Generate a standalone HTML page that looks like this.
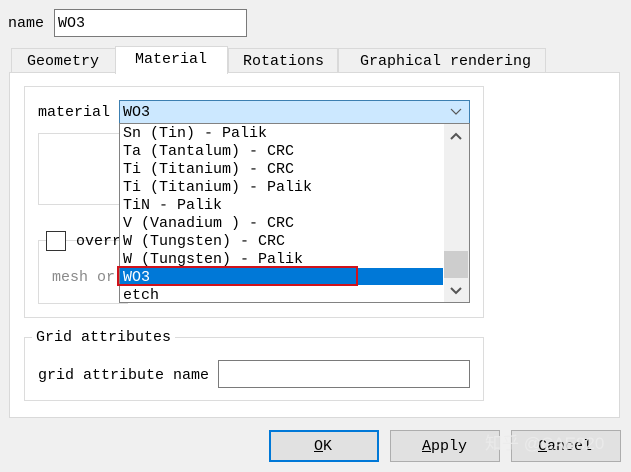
<!DOCTYPE html>
<html><head><meta charset="utf-8"><style>
*{margin:0;padding:0;box-sizing:border-box}
body{width:631px;height:472px;background:#f0f0f0;position:relative;overflow:hidden;font-family:"Liberation Mono","Noto Sans CJK SC",monospace;font-size:15px;color:#000}
.a{position:absolute;white-space:pre;line-height:18px}
.box{position:absolute}
</style></head><body>
<div class="a" style="left:8px;top:15px">name</div>
<div class="box" style="left:54px;top:9px;width:193px;height:28px;background:#fff;border:1px solid #7a7a7a"></div>
<div class="a" style="left:58px;top:15px">WO3</div>

<!-- tabs -->
<div class="box" style="left:11px;top:48px;width:105px;height:25px;background:#f0f0f0;border:1px solid #d9d9d9;border-bottom:none"></div>
<div class="a" style="left:27px;top:53px">Geometry</div>
<div class="box" style="left:228px;top:48px;width:110px;height:25px;border:1px solid #d9d9d9;border-bottom:none"></div>
<div class="a" style="left:243px;top:53px">Rotations</div>
<div class="box" style="left:338px;top:48px;width:208px;height:25px;border:1px solid #d9d9d9;border-bottom:none"></div>
<div class="a" style="left:360px;top:53px">Graphical rendering</div>
<div class="box" style="left:9px;top:72px;width:611px;height:346px;background:#fff;border:1px solid #d9d9d9"></div>
<div class="box" style="left:115px;top:46px;width:113px;height:28px;background:#fff;border:1px solid #d9d9d9;border-bottom:none"></div>
<div class="a" style="left:135px;top:51px">Material</div>

<!-- group 1 -->
<div class="box" style="left:24px;top:86px;width:460px;height:232px;border:1px solid #dcdcdc"></div>
<div class="a" style="left:38px;top:104px">material</div>
<div class="box" style="left:38px;top:133px;width:90px;height:72px;border:1px solid #dcdcdc"></div>
<div class="box" style="left:38px;top:240px;width:90px;height:64px;border:1px solid #dcdcdc"></div>
<div class="box" style="left:46px;top:231px;width:20px;height:20px;background:#fff;border:1px solid #333"></div>
<div class="a" style="left:76px;top:233px">overr</div>
<div class="a" style="left:52px;top:269px;color:#8a8a8a">mesh or</div>

<!-- combo -->
<div class="box" style="left:119px;top:100px;width:351px;height:24px;background:#cce8ff;border:1px solid #3c7fb1"></div>
<div class="a" style="left:123px;top:104px">WO3</div>
<svg class="box" style="left:449px;top:106px" width="14" height="10"><path d="M2 3 L7 8 L12 3" stroke="#555" fill="none" stroke-width="1.2"/></svg>
<div class="box" style="left:119px;top:123px;width:351px;height:180px;background:#fff;border:1px solid #828282"></div>
<div class="box" style="left:444px;top:124px;width:25px;height:178px;background:#f0f0f0"></div>
<div class="box" style="left:444px;top:251px;width:24px;height:27px;background:#cdcdcd"></div>
<svg class="box" style="left:449px;top:131px" width="14" height="10"><path d="M2 8 L7 3 L12 8" stroke="#555" fill="none" stroke-width="2"/></svg>
<svg class="box" style="left:449px;top:286px" width="14" height="10"><path d="M2 2 L7 7 L12 2" stroke="#555" fill="none" stroke-width="2"/></svg>
<div class="box" style="left:120px;top:268px;width:323px;height:17px;background:#0078d7"></div>
<div class="a" style="left:123px;top:125px">Sn (Tin) - Palik
Ta (Tantalum) - CRC
Ti (Titanium) - CRC
Ti (Titanium) - Palik
TiN - Palik
V (Vanadium ) - CRC
W (Tungsten) - CRC
W (Tungsten) - Palik
<span style="color:#fff">WO3</span>
etch</div>
<div class="box" style="left:117px;top:266px;width:241px;height:20px;border:2px solid #d0121b"></div>

<!-- group 2 -->
<div class="box" style="left:24px;top:337px;width:460px;height:64px;border:1px solid #dcdcdc"></div>
<div class="a" style="left:32px;top:329px;background:#fff;padding:0 4px">Grid attributes</div>
<div class="a" style="left:38px;top:367px">grid attribute name</div>
<div class="box" style="left:218px;top:360px;width:252px;height:28px;background:#fff;border:1px solid #7a7a7a"></div>

<!-- buttons -->
<div class="box" style="left:269px;top:430px;width:110px;height:32px;background:#e1e1e1;border:2px solid #0078d7"></div>
<div class="a" style="left:314px;top:438px"><u>O</u>K</div>
<div class="box" style="left:390px;top:430px;width:110px;height:32px;background:#e1e1e1;border:1px solid #adadad"></div>
<div class="a" style="left:422px;top:438px"><u>A</u>pply</div>
<div class="box" style="left:511px;top:430px;width:110px;height:32px;background:#e1e1e1;border:1px solid #adadad"></div>
<div class="a" style="left:538px;top:438px"><u>C</u>ancel</div>
<div class="a" style="left:485px;top:435px;color:rgba(235,235,235,0.9);font-family:'Liberation Sans','Noto Sans CJK SC',sans-serif;font-size:17px">知乎 @CAE820</div>
</body></html>
